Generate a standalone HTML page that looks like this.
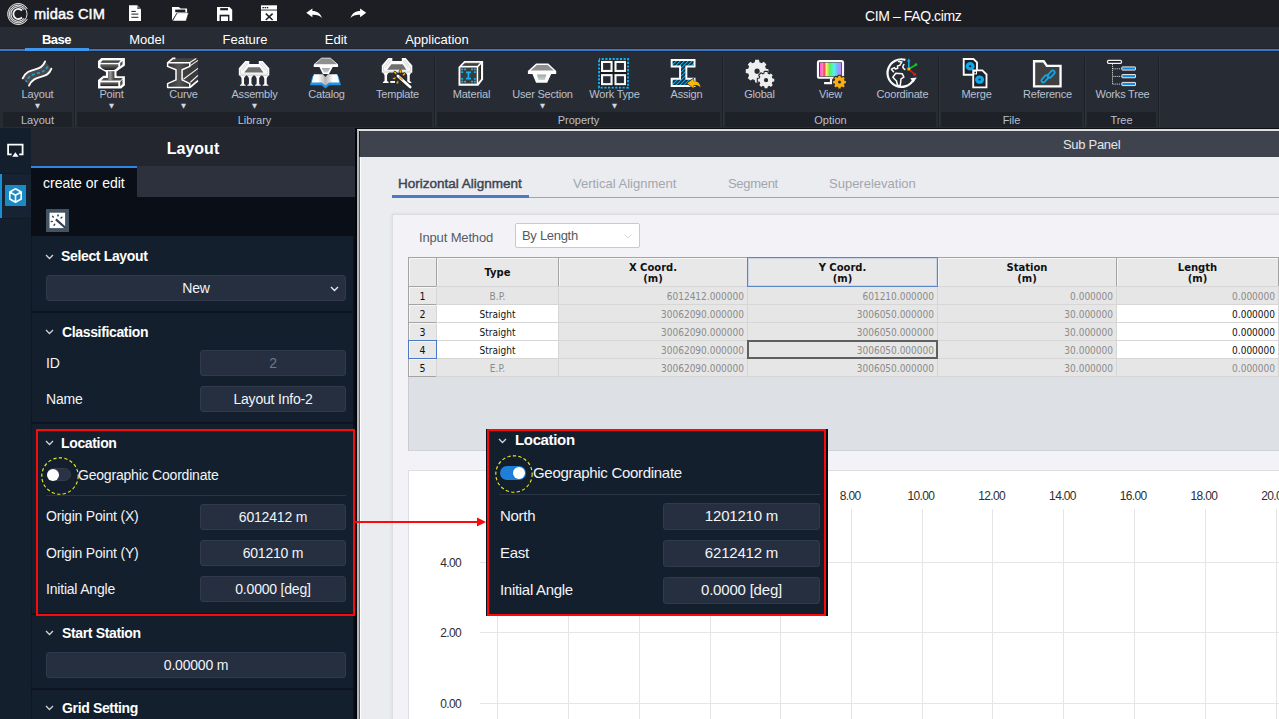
<!DOCTYPE html>
<html lang="en">
<head>
<meta charset="utf-8">
<title>CIM - FAQ.cimz</title>
<style>
*{box-sizing:border-box;margin:0;padding:0}
html,body{width:1279px;height:719px;overflow:hidden;background:#262a33;font-family:"Liberation Sans",sans-serif;}
.abs{position:absolute}
#app{position:relative;width:1279px;height:719px;overflow:hidden;background:#262a33}
/* title bar */
#title{left:0;top:0;width:1279px;height:27px;background:#1d1e23}
#title .brand{left:34px;top:4px;font-size:14.6px;letter-spacing:.15px;-webkit-text-stroke:0.45px #fff;color:#fff;line-height:20px;white-space:nowrap}
#title .doc{left:865px;top:6px;font-size:14px;letter-spacing:-0.4px;color:#fff;line-height:20px;white-space:nowrap}
/* menu */
#menu{left:0;top:27px;width:1279px;height:24px;background:#272b34}
#menu .mi{top:5px;font-size:13px;color:#fff;line-height:16px;white-space:nowrap;transform:translateX(-50%)}
#menuline{left:0;top:48px;width:1279px;height:3px;background:#3a77c4;border-top:1px solid #232329}
#baseline{left:25px;top:48px;width:64px;height:3px;background:#3f98ee}
/* ribbon */
#ribbon{left:0;top:51px;width:1279px;height:77px;background:#272b34;box-shadow:inset 0 1px 0 #232329}
.rb{top:0;width:90px;text-align:center;transform:translateX(-50%);margin-left:.5px}
.rb .lb{position:absolute;top:36px;left:0;width:100%;font-size:11px;letter-spacing:-0.2px;color:#b9c0cf;line-height:14px;white-space:nowrap;text-align:center}
.rb .ar{position:absolute;top:49px;left:0;width:100%;font-size:6.5px;color:#d4d7de;line-height:12px;text-align:center;font-family:'DejaVu Sans',sans-serif}
  .strip{top:61px;height:15px;background:#1e2128;font-size:11px;color:#b9c0cf;line-height:16px;text-align:center}
.sep{top:6px;width:2px;height:69px;background:#1c1f26;border-right:1px solid #30343f}
.ico{position:absolute;left:50%;transform:translateX(-50%)}
/* sidebar */
#leftcol{left:0;top:128px;width:31px;height:591px;background:#141f2d}
#sidehead{left:31px;top:128px;width:324px;height:38px;background:#23262f;color:#fff;font-weight:bold;font-size:16px;line-height:41px;text-align:center}
#tabstrip{left:31px;top:166px;width:324px;height:31px;background:#2c313d}
#tab{left:31px;top:166px;width:106px;height:31px;background:#0a0f17;border-top:2px solid #2f86e0;color:#fff;font-size:14px;line-height:31px;padding-left:12px}
#tool{left:31px;top:197px;width:324px;height:39px;background:#0a0f17}
#panel{left:31px;top:236px;width:322px;height:483px;background:#141f2d;box-shadow:inset 1px 0 0 #0f1722}
.divider{left:31px;width:322px;height:2px;background:#0d1520;box-shadow:0 0 1px #0d1520}
.h{left:61px;font-size:14px;letter-spacing:-0.35px;font-weight:bold;color:#fff;line-height:18px;white-space:nowrap}
.chev{width:9px;height:6px}
.lab{left:46px;font-size:14px;letter-spacing:-0.2px;color:#f2f4f7;line-height:18px;white-space:nowrap}
.inp{letter-spacing:-0.2px;background:#262f40;border:1px solid #303a4c;border-radius:3px;color:#f2f4f7;font-size:14px;text-align:center;height:26px;line-height:24px;white-space:nowrap}
#gutter{left:355px;top:128px;width:2px;height:591px;background:#04060a}
/* sub panel */
#sub{left:357px;top:129px;width:922px;height:590px;background:#ebecf0;border-left:2px solid #b4b7ba;border-top:2px solid #dcdee0;box-shadow:0 -1px 0 #0c0e12}
#subtitle{left:360px;top:131px;width:919px;height:26px;background:#3f434e;color:#e4e6ea;font-size:13px;line-height:27px;box-shadow:-1px 0 0 #141a24}
.t{font-size:13px;line-height:16px;white-space:nowrap}
table.g{border-collapse:collapse;font-family:"DejaVu Sans","Liberation Sans",sans-serif;font-size:10px;table-layout:fixed}

.gh{background:#e8e8e8;border:1px solid #a3a3a3;box-shadow:inset 1px 1px 0 #f6f6f6;font-family:"DejaVu Sans","Liberation Sans",sans-serif;font-size:10px;font-weight:bold;color:#111;text-align:center;white-space:nowrap;overflow:hidden}
.gc{background:#e6e6e6;border:1px solid #d6d6d6;font-family:"DejaVu Sans Condensed","DejaVu Sans","Liberation Sans",sans-serif;font-size:10px;color:#8b8b8b;line-height:19px;padding:0 3px;white-space:nowrap;overflow:hidden}
.gc.w{background:#fff;color:#111}
.ax{font-size:12px;color:#2e2e2e;line-height:14px;letter-spacing:-0.65px;white-space:nowrap}
.pl{font-size:15px;letter-spacing:-0.3px}
.pi{font-size:15px;height:27px;line-height:23px}
</style>
</head>
<body>
<div id="app">

<!-- TITLE BAR -->
<div id="title" class="abs">
  <div class="abs brand">midas CIM</div>
  <div class="abs doc">CIM &#8211; FAQ.cimz</div>
</div>

<!-- MENU BAR -->
<div id="menu" class="abs">
  <div class="abs mi" style="left:56.5px;font-weight:bold;letter-spacing:-0.5px">Base</div>
  <div class="abs mi" style="left:147px">Model</div>
  <div class="abs mi" style="left:245px">Feature</div>
  <div class="abs mi" style="left:336px">Edit</div>
  <div class="abs mi" style="left:437px">Application</div>
</div>
<div id="menuline" class="abs"></div>
<div id="baseline" class="abs"></div>

<!-- RIBBON -->
<div id="ribbon" class="abs">
  <div class="abs rb" style="left:37px"><div class="lb">Layout</div><div class="ar">&#9660;</div></div>
  <div class="abs rb" style="left:111px"><div class="lb">Point</div><div class="ar">&#9660;</div></div>
  <div class="abs rb" style="left:183px"><div class="lb">Curve</div><div class="ar">&#9660;</div></div>
  <div class="abs rb" style="left:254px"><div class="lb">Assembly</div><div class="ar">&#9660;</div></div>
  <div class="abs rb" style="left:326px"><div class="lb">Catalog</div></div>
  <div class="abs rb" style="left:397px"><div class="lb">Template</div></div>
  <div class="abs rb" style="left:471px"><div class="lb">Material</div></div>
  <div class="abs rb" style="left:542px"><div class="lb">User Section</div><div class="ar">&#9660;</div></div>
  <div class="abs rb" style="left:614px"><div class="lb">Work Type</div><div class="ar">&#9660;</div></div>
  <div class="abs rb" style="left:686px"><div class="lb">Assign</div></div>
  <div class="abs rb" style="left:759px"><div class="lb">Global</div></div>
  <div class="abs rb" style="left:830px"><div class="lb">View</div></div>
  <div class="abs rb" style="left:902px"><div class="lb">Coordinate</div></div>
  <div class="abs rb" style="left:976px"><div class="lb">Merge</div></div>
  <div class="abs rb" style="left:1047px"><div class="lb">Reference</div></div>
  <div class="abs rb" style="left:1122px"><div class="lb">Works Tree</div></div>

  <div class="abs strip" style="left:3px;width:69px">Layout</div>
  <div class="abs strip" style="left:77px;width:355px">Library</div>
  <div class="abs strip" style="left:437px;width:283px">Property</div>
  <div class="abs strip" style="left:725px;width:211px">Option</div>
  <div class="abs strip" style="left:941px;width:141px">File</div>
  <div class="abs strip" style="left:1087px;width:69px">Tree</div>
  <div class="abs sep" style="left:74px"></div>
  <div class="abs sep" style="left:434px"></div>
  <div class="abs sep" style="left:722px"></div>
  <div class="abs sep" style="left:938px"></div>
  <div class="abs sep" style="left:1084px"></div>
  <div class="abs sep" style="left:1158px"></div>
</div>

<!--ICONS--><svg class="abs" style="left:0;top:0;pointer-events:none" width="1279" height="128" viewBox="0 0 1279 128">
<defs>
<linearGradient id="gv" x1="0" y1="0" x2="0" y2="1"><stop offset="0" stop-color="#6a6a6a"/><stop offset="1" stop-color="#222"/></linearGradient>
<linearGradient id="gh" x1="0" y1="0" x2="1" y2="0"><stop offset="0" stop-color="#8a8a8a"/><stop offset="1" stop-color="#2a2a2a"/></linearGradient>
<linearGradient id="gcur" x1="0" y1="0" x2="1" y2="0"><stop offset="0" stop-color="#2e2e2e"/><stop offset=".5" stop-color="#555"/><stop offset="1" stop-color="#2e2e2e"/></linearGradient>
<linearGradient id="gweb" x1="0" y1="0" x2="1" y2="0"><stop offset="0" stop-color="#6a6a6a"/><stop offset=".35" stop-color="#9a9a9a"/><stop offset="1" stop-color="#3a3a3a"/></linearGradient>
<linearGradient id="gh2" x1="0" y1="0" x2="1" y2="0"><stop offset="0" stop-color="#555"/><stop offset="1" stop-color="#1e1e1e"/></linearGradient>
<linearGradient id="gfun" x1="0" y1="0" x2="0" y2="1"><stop offset="0" stop-color="#9aa3a3"/><stop offset="1" stop-color="#e8ecec"/></linearGradient>
<linearGradient id="gbook" x1="0" y1="0" x2="1" y2="0"><stop offset="0" stop-color="#fff"/><stop offset=".22" stop-color="#fff"/><stop offset=".5" stop-color="#b4b4b4"/><stop offset=".78" stop-color="#fff"/><stop offset="1" stop-color="#fff"/></linearGradient>
<linearGradient id="gfun2" x1="0" y1="0" x2="0" y2="1"><stop offset="0" stop-color="#9da5a5"/><stop offset="1" stop-color="#cfd4d4"/></linearGradient>
<linearGradient id="rain" x1="0" y1="0" x2="1" y2="0"><stop offset="0" stop-color="#ff48e8"/><stop offset=".12" stop-color="#ff86c4"/><stop offset=".21" stop-color="#ff3c50"/><stop offset=".31" stop-color="#fff070"/><stop offset=".46" stop-color="#58f050"/><stop offset=".66" stop-color="#50f4f0"/><stop offset=".84" stop-color="#86a4ff"/><stop offset="1" stop-color="#c884f0"/></linearGradient>
<pattern id="hatch" width="2.8" height="2.8" patternUnits="userSpaceOnUse" patternTransform="rotate(-45)"><rect width="2.8" height="2.8" fill="#1f1b1c"/><rect width="2.8" height="1.2" fill="#1aa9e6"/></pattern>
</defs>
<g fill="none" stroke="#f4f4f4" stroke-linecap="butt">
<path d="M25.62 18.82 A8.85 8.85 0 1 1 25.62 9.18" stroke-width="4.0" stroke-opacity="0.22"/>
<path d="M27.34 19.07 A10.45 10.45 0 1 1 27.34 8.93" stroke-width="1.0" stroke-opacity="0.9"/>
<circle cx="18.2" cy="14.0" r="8.85" stroke-width="1.0" stroke-opacity="0.9"/>
<path d="M23.91 18.46 A7.25 7.25 0 1 1 23.91 9.54" stroke-width="1.05" stroke-opacity="0.9"/>
<path d="M22.03 17.51 A5.05 5.05 0 1 1 22.03 10.49" stroke-width="1.85" />
</g>
<path d="M129 5.3 H137.2 L141 9.2 V21 H129 Z" fill="#fff"/><path d="M137.4 6 V9 H140.4 Z" fill="#1d1e23" opacity=".8"/><path d="M131.4 11.4 H135.8 M131.4 14.1 H138.4 M131.4 17.3 H138.4" stroke="#1d1e23" stroke-width="1"/>
<path d="M172 7 H178.8 L180.7 8.6 H187.1 V13 H176.6 L172 20.6 Z" fill="#fff"/><rect x="175.2" y="9.6" width="10.1" height="2.6" fill="#1d1e23"/><path d="M177.3 12.7 H188.6 L186 21 H172.6 Z" fill="#fff" stroke="#1d1e23" stroke-width=".5"/>
<path d="M217 7 H229.5 L232.2 9.7 V21 H217 Z" fill="#fff"/><rect x="220.2" y="8.1" width="7.8" height="2.2" fill="#1d1e23"/><rect x="219.6" y="14.7" width="9.8" height="6.3" fill="#1d1e23"/><rect x="221" y="16.4" width="7" height="4.6" fill="#fff"/>
<rect x="261" y="5.3" width="16" height="15.7" fill="#fff"/><rect x="261" y="9.6" width="16" height="0.9" fill="#1d1e23"/><path d="M262.4 7.6 h1.5 m.7 0 h1.5 m.7 0 h1.5" stroke="#1d1e23" stroke-width="1.1"/><path d="M265.8 13.6 L272.6 20 M272.6 13.6 L265.8 20" stroke="#1d1e23" stroke-width="1.5"/>
<path d="M306.3 12.8 L312.4 8.5 V11 C317 11 320.6 13.5 322 18 C319.5 15.4 316.5 14.6 312.4 14.8 V17.2 Z" fill="#fff"/>
<path d="M366.2 12.8 L360.1 8.5 V11 C355.5 11 351.9 13.5 350.5 18 C353 15.4 356 14.6 360.1 14.8 V17.2 Z" fill="#fff"/>
<path d="M22.7 78.3 C25.5 72 30 70.8 34.5 69.6 C39.5 68.3 43 67 45.1 61.4 L51.4 68.7 C49.3 74.3 45.8 75.6 40.8 76.9 C36.3 78.1 31.8 79.3 29 85.6 Z" fill="#4a4848"/>
<path d="M22.7 78.3 C25.5 72 30 70.8 34.5 69.6 C39.5 68.3 43 67 45.1 61.4 M29 85.6 C31.8 79.3 36.3 78.1 40.8 76.9 C45.8 75.6 49.3 74.3 51.4 68.7" fill="none" stroke="#fafafa" stroke-width="1.9" stroke-linecap="round"/>
<path d="M25.85 81.95 C28.65 75.65 33.15 74.45 37.65 73.25 C42.65 71.95 46.15 70.65 48.25 65.05" fill="none" stroke="#1f9bd1" stroke-width="1.7" stroke-dasharray="3.2 2.1" stroke-dashoffset="1.6"/>
<path d="M98 60.9 L101.4 58 H124.9 V65.4 L116.5 71.4 V75.6 L117.2 76.2 H124.9 V85.2 L121.2 88.6 H98 V79.9 L103.3 75.7 H105.9 V72 L98 67.7 Z" fill="#fdfdfd"/>
<path d="M100.4 62.7 L102.7 60.3 H120.7 L118.6 62.7 Z" fill="url(#gv)"/>
<path d="M120.2 62.9 L122.5 60.9 V64.3 L120.2 66.4 Z" fill="#4a4a4a"/>
<path d="M100.4 64.3 H118.3 V66.4 C117 68.4 115.4 69.4 113.8 69.9 H105.4 C103.6 69.4 101.6 68.4 100.4 66.4 Z" fill="url(#gv)"/>
<path d="M101.2 80.6 L103.8 78 H122.8 L120.7 80.6 Z" fill="#4c4c4c"/>
<rect x="108" y="71.2" width="6.4" height="8.9" fill="url(#gweb)"/>
<rect x="100.4" y="82.3" width="17.9" height="3.8" fill="url(#gv)"/>
<path d="M120.2 82 L122.5 79.6 V84.1 L120.2 86.2 Z" fill="#4a4a4a"/>
<path d="M189.8 62.7 L198 58.2 V80.6 L189.8 87.6 Z" fill="#3a3a3a"/>
<path d="M182.1 69.8 L189.8 66.4 V83.6 L182.1 79.9 Z" fill="#3e3e3e"/>
<path d="M167.6 62.7 L172.6 58.2 H198 L189.8 62.7 Z" fill="#444"/>
<path d="M167.6 62.9 L172.8 58.4 H175.4" stroke="#fff" stroke-width="1.6" fill="none" stroke-linejoin="round"/>
<path d="M167.6 62.7 H189.8 V66.4 L182.1 69.8 V79.9 L189.8 83.6 V87.6 H167.6 V83.6 L176 79.9 V69.8 L167.6 66.4 Z" fill="url(#gcur)" stroke="#fff" stroke-width="1.5" stroke-linejoin="round"/>
<path d="M190 62.6 L196.2 58.6 M190.4 65.6 L198 60.4 M183.4 79.2 L198 68.4 M190.4 82.2 L198 75.4" stroke="#f4f4f4" stroke-width="1.15"/>
<path d="M189.8 87.5 L198 80.6" stroke="#fff" stroke-width="1.7"/>
<path d="M245.20 60.90 L249.30 60.90 L249.30 64.00 L258.80 64.00 L258.80 60.90 L262.70 60.90 L269.30 68.30 L269.30 75.30 L238.80 75.30 L238.80 68.30 Z" fill="#fbfbfb"/>
<path d="M248.40 67.20 L259.70 67.20 L263.40 72.60 L244.20 72.60 Z" fill="#6f6f6f"/>
<path d="M246.60 62.60 L241.00 69.60 M247.90 63.60 L242.60 70.60 M261.40 62.60 L267.00 69.60 M260.10 63.60 L265.40 70.60" stroke="#b9b9b9" stroke-width=".55" fill="none"/>
<path d="M240.60 69.60 V74.10 H267.40 V69.60" stroke="#c4c4c4" stroke-width=".6" fill="none"/>
<path d="M239.00 75.20 H246.60 C244.40 76.60 244.05 77.80 244.05 79.20 V83.40 C244.10 84.40 245.00 84.60 245.70 85.00 V85.80 H239.90 V85.00 C240.60 84.60 241.50 84.40 241.55 83.40 V79.20 C241.55 77.80 241.20 76.60 239.00 75.20 Z" fill="#fbfbfb"/>
<path d="M246.40 75.20 H254.00 C251.80 76.60 251.45 77.80 251.45 79.20 V83.40 C251.50 84.40 252.40 84.60 253.10 85.00 V85.80 H247.30 V85.00 C248.00 84.60 248.90 84.40 248.95 83.40 V79.20 C248.95 77.80 248.60 76.60 246.40 75.20 Z" fill="#fbfbfb"/>
<path d="M254.10 75.20 H261.70 C259.50 76.60 259.15 77.80 259.15 79.20 V83.40 C259.20 84.40 260.10 84.60 260.80 85.00 V85.80 H255.00 V85.00 C255.70 84.60 256.60 84.40 256.65 83.40 V79.20 C256.65 77.80 256.30 76.60 254.10 75.20 Z" fill="#fbfbfb"/>
<path d="M261.70 75.20 H269.30 C267.10 76.60 266.75 77.80 266.75 79.20 V83.40 C266.80 84.40 267.70 84.60 268.40 85.00 V85.80 H262.60 V85.00 C263.30 84.60 264.20 84.40 264.25 83.40 V79.20 C264.25 77.80 263.90 76.60 261.70 75.20 Z" fill="#fbfbfb"/>
<path d="M321.4 58.2 H330.4 L337.8 64.6 H314 Z" fill="#8f8f8f" stroke="#fff" stroke-width=".8" stroke-linejoin="round"/>
<rect x="313.7" y="64.5" width="24.4" height="2.5" rx=".4" fill="#fff"/>
<path d="M319.4 66.9 H332.7 L328.8 74.2 H323 Z" fill="#fff"/>
<path d="M321.7 68 H330.2 L327.8 72.6 H323.9 Z" fill="url(#gfun2)"/>
<path d="M312.4 76 L310 85.3 H321.6 L325.4 88.4 L329.2 85.3 H341 L338.6 76 Z" fill="#1f93ea"/>
<path d="M321.6 74 H329.2 L325.4 78 Z" fill="#22252d"/>
<path d="M313.8 74.3 H323 L325.4 76.9 L327.8 74.3 H337.3 L339.2 82.6 H329 L325.4 85.6 L321.8 82.6 H311.8 Z" fill="url(#gbook)"/>
<path d="M388.20 58.00 L392.30 58.00 L392.30 61.10 L401.80 61.10 L401.80 58.00 L405.70 58.00 L412.30 65.40 L412.30 72.40 L381.80 72.40 L381.80 65.40 Z" fill="#fbfbfb"/>
<path d="M391.40 64.30 L402.70 64.30 L406.40 69.70 L387.20 69.70 Z" fill="#6f6f6f"/>
<path d="M389.60 59.70 L384.00 66.70 M390.90 60.70 L385.60 67.70 M404.40 59.70 L410.00 66.70 M403.10 60.70 L408.40 67.70" stroke="#b9b9b9" stroke-width=".55" fill="none"/>
<path d="M383.60 66.70 V71.20 H410.40 V66.70" stroke="#c4c4c4" stroke-width=".6" fill="none"/>
<path d="M382.00 72.30 H389.60 C387.40 73.70 387.05 74.90 387.05 76.30 V80.50 C387.10 81.50 388.00 81.70 388.70 82.10 V82.90 H382.90 V82.10 C383.60 81.70 384.50 81.50 384.55 80.50 V76.30 C384.55 74.90 384.20 73.70 382.00 72.30 Z" fill="#fbfbfb"/>
<path d="M404.70 72.30 H412.30 C410.10 73.70 409.75 74.90 409.75 76.30 V80.50 C409.80 81.50 410.70 81.70 411.40 82.10 V82.90 H405.60 V82.10 C406.30 81.70 407.20 81.50 407.25 80.50 V76.30 C407.25 74.90 406.90 73.70 404.70 72.30 Z" fill="#fbfbfb"/>
<rect x="390.3" y="81" width="4.7" height="1.9" fill="#fbfbfb"/>
<path d="M397.7 75.7 L410.4 87.3" stroke="#20242c" stroke-width="4.6" stroke-linecap="round"/>
<path d="M397.9 75.9 L410.2 87.1" stroke="#fff" stroke-width="2.7" stroke-linecap="round"/><path d="M398.9 76.8 L402.6 80.2" stroke="#ff9a14" stroke-width="1.5"/>
<g fill="#f5b400" stroke="#20242c" stroke-width=".7"><ellipse cx="400.4" cy="71.5" rx="1.2" ry="1.8"/><ellipse cx="395.4" cy="72.8" rx="1.2" ry="1.9" transform="rotate(-45 395.4 72.8)"/><ellipse cx="404" cy="74.3" rx="1.2" ry="1.9" transform="rotate(50 404 74.3)"/><ellipse cx="394.3" cy="78.3" rx="1.9" ry="1.2" transform="rotate(-15 394.3 78.3)"/><ellipse cx="397.5" cy="82.4" rx="1.2" ry="1.8" transform="rotate(40 397.5 82.4)"/></g>
<path d="M458.5 66.9 L464.3 60.9 H483.1 V79.4 L478.3 85.7 H458.5 Z" fill="#fdfdfd"/>
<rect x="460.4" y="67.5" width="16.3" height="16.1" fill="#3b3a3a"/>
<path d="M461.9 65.7 L465 62.8 H480.2 L477.4 65.7 Z" fill="url(#gv)"/>
<path d="M478.1 67.2 L481 64.2 V78.9 L478.1 82.8 Z" fill="url(#gh2)"/>
<g fill="#14b2f2"><rect x="461.2" y="68.4" width="2" height="1.8" rx=".5"/><rect x="464.1" y="68.4" width="2" height="1.8" rx=".5"/><rect x="471.0" y="68.4" width="2" height="1.8" rx=".5"/><rect x="473.9" y="68.4" width="2" height="1.8" rx=".5"/><rect x="461.2" y="71.3" width="2" height="1.8" rx=".5"/><rect x="473.9" y="71.3" width="2" height="1.8" rx=".5"/><rect x="461.2" y="77.9" width="2" height="1.8" rx=".5"/><rect x="473.9" y="77.9" width="2" height="1.8" rx=".5"/><rect x="461.2" y="80.8" width="2" height="1.8" rx=".5"/><rect x="464.1" y="80.8" width="2" height="1.8" rx=".5"/><rect x="471.0" y="80.8" width="2" height="1.8" rx=".5"/><rect x="473.9" y="80.8" width="2" height="1.8" rx=".5"/></g>
<path d="M465.9 72.3 H471 M465.9 78.7 H471 M468.45 72.3 V78.7" stroke="#14b2f2" stroke-width="1.7" fill="none"/>
<path d="M536.1 63.5 H548.3 L556.2 70.9 V74.1 H551.2 L547.2 82.8 H536.1 L532.4 74.1 H527.9 V70.9 Z" fill="#fcfcfc"/>
<path d="M536.9 65.1 H547.7 L553.8 70.4 H530.6 Z" fill="#8f8f8f"/>
<path d="M536.9 74.4 H546.4 L544.8 80 H538.5 Z" fill="url(#gfun2)"/>
<rect x="600" y="60" width="27" height="26.7" fill="#17191e"/>
<rect x="599.05" y="58.95" width="29" height="28.7" fill="none" stroke="#0fb4f6" stroke-width="1.9" stroke-dasharray="2.1 1.55" stroke-dashoffset="1"/>
<rect x="602.05" y="61.95" width="9.5" height="9.0" fill="#262a33" stroke="#f8f8f8" stroke-width="2.1"/>
<rect x="615.5" y="61.95" width="9.5" height="9.0" fill="#262a33" stroke="#f8f8f8" stroke-width="2.1"/>
<rect x="602.05" y="75.15" width="9.5" height="9.0" fill="#262a33" stroke="#f8f8f8" stroke-width="2.1"/>
<rect x="615.5" y="75.15" width="9.5" height="9.0" fill="#262a33" stroke="#f8f8f8" stroke-width="2.1"/>
<path d="M671.65 59.95 H694.55 V66.55 H686.35 V78.75 H694.55 V86.05 H671.65 V78.75 H680.05 V66.55 H671.65 Z" fill="url(#hatch)" stroke="#fdfdfd" stroke-width="1.9"/>
<path d="M687.2 83.2 L693.6 78.4 V81.2 C698 81 700.2 83.6 700.5 87.4 C698.8 85.4 696.8 85 693.6 85.1 V88.2 Z" fill="#fbb800" stroke="#262a33" stroke-width="1.1" stroke-linejoin="round" paint-order="stroke"/>
<path d="M768.44 69.31 L768.44 73.09 L765.99 73.56 L765.06 75.82 L766.46 77.89 L763.79 80.56 L761.72 79.16 L759.46 80.09 L758.99 82.54 L755.21 82.54 L754.74 80.09 L752.48 79.16 L750.41 80.56 L747.74 77.89 L749.14 75.82 L748.21 73.56 L745.76 73.09 L745.76 69.31 L748.21 68.84 L749.14 66.58 L747.74 64.51 L750.41 61.84 L752.48 63.24 L754.74 62.31 L755.21 59.86 L758.99 59.86 L759.46 62.31 L761.72 63.24 L763.79 61.84 L766.46 64.51 L765.06 66.58 L765.99 68.84 Z M754.50 71.20 a2.6 2.6 0 1 0 5.2 0 a2.6 2.6 0 1 0 -5.2 0 Z" fill="#eeeeee" fill-rule="evenodd" stroke-linejoin="round" />
<path d="M774.24 78.79 L774.24 81.51 L772.43 81.84 L771.76 83.46 L772.80 84.98 L770.88 86.90 L769.36 85.86 L767.74 86.53 L767.41 88.34 L764.69 88.34 L764.36 86.53 L762.74 85.86 L761.22 86.90 L759.30 84.98 L760.34 83.46 L759.67 81.84 L757.86 81.51 L757.86 78.79 L759.67 78.46 L760.34 76.84 L759.30 75.32 L761.22 73.40 L762.74 74.44 L764.36 73.77 L764.69 71.96 L767.41 71.96 L767.74 73.77 L769.36 74.44 L770.88 73.40 L772.80 75.32 L771.76 76.84 L772.43 78.46 Z M766.04 80.15 a0.01 0.01 0 1 0 0.02 0 a0.01 0.01 0 1 0 -0.02 0 Z" fill="#262a33" fill-rule="evenodd" stroke-linejoin="round" stroke="#262a33" stroke-width="2.2"/>
<path d="M774.24 78.79 L774.24 81.51 L772.43 81.84 L771.76 83.46 L772.80 84.98 L770.88 86.90 L769.36 85.86 L767.74 86.53 L767.41 88.34 L764.69 88.34 L764.36 86.53 L762.74 85.86 L761.22 86.90 L759.30 84.98 L760.34 83.46 L759.67 81.84 L757.86 81.51 L757.86 78.79 L759.67 78.46 L760.34 76.84 L759.30 75.32 L761.22 73.40 L762.74 74.44 L764.36 73.77 L764.69 71.96 L767.41 71.96 L767.74 73.77 L769.36 74.44 L770.88 73.40 L772.80 75.32 L771.76 76.84 L772.43 78.46 Z M763.95 80.15 a2.1 2.1 0 1 0 4.2 0 a2.1 2.1 0 1 0 -4.2 0 Z" fill="#eeeeee" fill-rule="evenodd" stroke-linejoin="round" />
<rect x="819" y="62" width="23" height="15" fill="#22252d"/><rect x="819.7" y="62.7" width="21.7" height="13.5" fill="url(#rain)"/>
<rect x="817.95" y="61.15" width="25.1" height="16.6" rx="1.6" fill="none" stroke="#fbfbfb" stroke-width="2.1"/>
<path d="M831.1 78.6 V83.2 H824.1" fill="none" stroke="#fbfbfb" stroke-width="2.3"/>
<path d="M845.91 81.03 L845.91 83.17 L844.33 83.38 L843.82 84.61 L844.79 85.88 L843.28 87.39 L842.01 86.42 L840.78 86.93 L840.57 88.51 L838.43 88.51 L838.22 86.93 L836.99 86.42 L835.72 87.39 L834.21 85.88 L835.18 84.61 L834.67 83.38 L833.09 83.17 L833.09 81.03 L834.67 80.82 L835.18 79.59 L834.21 78.32 L835.72 76.81 L836.99 77.78 L838.22 77.27 L838.43 75.69 L840.57 75.69 L840.78 77.27 L842.01 77.78 L843.28 76.81 L844.79 78.32 L843.82 79.59 L844.33 80.82 Z M839.49 82.10 a0.01 0.01 0 1 0 0.02 0 a0.01 0.01 0 1 0 -0.02 0 Z" fill="#262a33" fill-rule="evenodd" stroke-linejoin="round" stroke="#262a33" stroke-width="2"/>
<path d="M845.91 81.03 L845.91 83.17 L844.33 83.38 L843.82 84.61 L844.79 85.88 L843.28 87.39 L842.01 86.42 L840.78 86.93 L840.57 88.51 L838.43 88.51 L838.22 86.93 L836.99 86.42 L835.72 87.39 L834.21 85.88 L835.18 84.61 L834.67 83.38 L833.09 83.17 L833.09 81.03 L834.67 80.82 L835.18 79.59 L834.21 78.32 L835.72 76.81 L836.99 77.78 L838.22 77.27 L838.43 75.69 L840.57 75.69 L840.78 77.27 L842.01 77.78 L843.28 76.81 L844.79 78.32 L843.82 79.59 L844.33 80.82 Z M838.00 82.10 a1.5 1.5 0 1 0 3.0 0 a1.5 1.5 0 1 0 -3.0 0 Z" fill="#fbae0c" fill-rule="evenodd" stroke-linejoin="round" />
<path d="M905.4 59.9 A13.8 13.8 0 1 0 913.6 79.4" fill="none" stroke="#fbfbfb" stroke-width="2.2"/>
<path d="M910.2 78.2 L916.8 77.6 L913.4 82.4 Z" fill="#fbfbfb"/>
<path d="M898.5 61.4 L901.9 61.9 L899.7 65.4 L897.5 66.0 L897.7 68.3 L895.4 69.1 L894.4 67.6 L891.4 69.2 L893.5 71.7" fill="none" stroke="#fbfbfb" stroke-width="1.5" stroke-linejoin="round" stroke-linecap="round"/>
<path d="M895.8 73.3 L902.2 73.7 L903.9 77.2 L901.0 78.8 L900.3 85.3 L897.5 85.5 L896.5 81.0 L892.8 77.2 Z" fill="none" stroke="#fbfbfb" stroke-width="1.5" stroke-linejoin="round"/>
<path d="M903.9 64.5 Q901.4 67.2 904.8 69.4" fill="none" stroke="#fbfbfb" stroke-width="1.6" stroke-linecap="round"/>
<path d="M908.8 69 V61" stroke="#12a2e8" stroke-width="1.7"/><path d="M906.9 61.6 L908.8 58.2 L910.7 61.6 Z" fill="#12a2e8"/>
<path d="M908.8 69 L915.6 65" stroke="#14c814" stroke-width="1.6"/><circle cx="916" cy="64.7" r="1.4" fill="#14c814"/>
<path d="M908.8 69 L914.2 74" stroke="#e41414" stroke-width="1.6"/><circle cx="914.6" cy="74.3" r="1.6" fill="#e41414"/>
<rect x="907.4" y="67.7" width="2.8" height="2.7" fill="#fbb80c"/>
<path d="M963.7 59 H973.4 L977 62.3 V74.7 H963.7 Z" fill="#1f2026" stroke="#fdfdfd" stroke-width="1.85" stroke-linejoin="miter"/>
<ellipse cx="970.1" cy="66.2" rx="2.9" ry="2.6" fill="none" stroke="#10a8ec" stroke-width="3.2"/>
<path d="M973.2 70.3 H982.4 L986.5 74.5 V87.3 H973.2 Z" fill="#1f2026" stroke="#fdfdfd" stroke-width="1.85" stroke-linejoin="miter"/>
<ellipse cx="979.6" cy="79.6" rx="2.9" ry="2.6" fill="none" stroke="#10a8ec" stroke-width="3.2"/>
<rect x="973.9" y="71.2" width="2.6" height="2.7" fill="#1f2026" stroke="#fdfdfd" stroke-width="1"/>
<path d="M1034.05 61.25 H1043.7 L1046.9 65.95 H1060.55 V86.35 H1034.05 Z" fill="#404040" stroke="#fdfdfd" stroke-width="2.3" stroke-linejoin="miter"/>
<g fill="none" stroke="#10a8ec" stroke-width="1.7"><rect x="-4.2" y="-1.9" width="8.4" height="3.8" rx="1.9" transform="translate(1051.2,74.1) rotate(-48)"/><rect x="-4.2" y="-1.9" width="8.4" height="3.8" rx="1.9" transform="translate(1044.9,78.8) rotate(-48)"/></g>
<rect x="1107.5" y="60.4" width="14" height="2.9" rx="1" fill="#1f2128" stroke="#f4f4f4" stroke-width="1.2"/>
<path d="M1112.5 64.2 V84.6 M1113.4 68.8 H1121.4 M1113.4 76.4 H1121.4 M1113.4 84.1 H1121.4" stroke="#e4e4e4" stroke-width="1" stroke-dasharray="1 0.9" fill="none"/>
<rect x="1121.9" y="66.9" width="13.6" height="3.2" rx=".5" fill="#1488e8" stroke="#ece6e2" stroke-width="1"/>
<rect x="1121.9" y="74.55000000000001" width="13.6" height="3.2" rx=".5" fill="#1488e8" stroke="#ece6e2" stroke-width="1"/>
<rect x="1121.9" y="82.4" width="13.6" height="3.2" rx=".5" fill="#1488e8" stroke="#ece6e2" stroke-width="1"/>
</svg><!--/ICONS-->
<!-- SIDEBAR -->
<div id="leftcol" class="abs"></div>
<div id="sidehead" class="abs">Layout</div>
<div id="tabstrip" class="abs"></div>
<div id="tab" class="abs">create or edit</div>
<div id="tool" class="abs"></div>
<div id="panel" class="abs"></div>

<!-- left column icons -->
<div class="abs" style="left:0;top:173px;width:31px;height:1px;background:#111a26"></div>
<div class="abs" style="left:0;top:174px;width:31px;height:44px;background:#172332"></div>
<div class="abs" style="left:0;top:218px;width:31px;height:1px;background:#111a26"></div>
<div class="abs" style="left:0;top:174px;width:2px;height:44px;background:#1b8fd6"></div>
<div class="abs" style="left:5px;top:185px;width:21px;height:21px;background:#1a8ac6"></div>
<svg class="abs" style="left:5px;top:185px" width="21" height="21" viewBox="0 0 21 21"><path d="M10.5 3.8 L16.2 7 V14 L10.5 17.2 L4.8 14 V7 Z M4.8 7 L10.5 10.3 L16.2 7 M10.5 10.3 V17.2" fill="none" stroke="#fff" stroke-width="1.6" stroke-linejoin="round"/></svg>
<svg class="abs" style="left:7px;top:143px" width="17" height="16" viewBox="0 0 17 16"><path d="M4.6 11.4 H1.1 V1.6 H15.6 V11.4 H12.2" fill="none" stroke="#fff" stroke-width="1.8"/><path d="M8.4 9.2 L11.6 13.8 H5.2 Z" fill="#fff"/></svg>

<!-- tool button -->
<div class="abs" style="left:46px;top:209px;width:23px;height:23px;background:#425361"></div>
<svg class="abs" style="left:46px;top:209px" width="23" height="23" viewBox="46 209 23 23"><rect x="49.5" y="212.7" width="15.6" height="15.4" fill="#fff"/><path d="M55.9 219.4 L65.3 227.8" stroke="#33424e" stroke-width="2.2"/><g fill="#33424e"><ellipse cx="58" cy="215.4" rx=".8" ry="1.2"/><ellipse cx="53" cy="216.7" rx=".8" ry="1.3" transform="rotate(-45 53 216.7)"/><ellipse cx="61.5" cy="217.7" rx=".8" ry="1.3" transform="rotate(50 61.5 217.7)"/><ellipse cx="51.8" cy="221.5" rx="1.3" ry=".8"/><ellipse cx="54.4" cy="224.8" rx=".8" ry="1.3" transform="rotate(35 54.4 224.8)"/></g></svg>

<!-- Select Layout -->
<svg class="abs chev" style="left:45px;top:254px" viewBox="0 0 9 6"><path d="M1 1 L4.5 4.5 L8 1" fill="none" stroke="#cfd5de" stroke-width="1.3"/></svg>
<div class="abs h" style="top:247px">Select Layout</div>
<div class="abs inp" style="left:46px;top:275px;width:300px">New</div>
<svg class="abs chev" style="left:330px;top:286px" viewBox="0 0 9 6"><path d="M1 1 L4.5 4.5 L8 1" fill="none" stroke="#e6e9ee" stroke-width="1.4"/></svg>
<div class="abs divider" style="top:311px"></div>

<!-- Classification -->
<svg class="abs chev" style="left:45px;top:329px" viewBox="0 0 9 6"><path d="M1 1 L4.5 4.5 L8 1" fill="none" stroke="#cfd5de" stroke-width="1.3"/></svg>
<div class="abs h" style="top:323px;left:62px">Classification</div>
<div class="abs lab" style="top:354px">ID</div>
<div class="abs inp" style="left:200px;top:350px;width:146px;color:#6d7888">2</div>
<div class="abs lab" style="top:390px">Name</div>
<div class="abs inp" style="left:200px;top:386px;width:146px">Layout Info-2</div>
<div class="abs divider" style="top:422px"></div>

<!-- Location -->
<svg class="abs chev" style="left:45px;top:440px" viewBox="0 0 9 6"><path d="M1 1 L4.5 4.5 L8 1" fill="none" stroke="#cfd5de" stroke-width="1.3"/></svg>
<div class="abs h" style="top:434px">Location</div>
<div class="abs" style="left:47px;top:468px;width:24px;height:13px;border-radius:7px;background:#2a3345;border:1px solid #323c4e"></div>
<div class="abs" style="left:47px;top:468.5px;width:12px;height:12px;border-radius:6px;background:#fff"></div>
<svg class="abs" style="left:38.7px;top:454.9px" width="42" height="42" viewBox="0 0 42 42"><circle cx="21" cy="21" r="18.2" fill="none" stroke="#e8e622" stroke-width="1.15" stroke-dasharray="3.3 2.3"/></svg>
<div class="abs lab" style="left:78px;top:466px">Geographic Coordinate</div>
<div class="abs" style="left:46px;top:495px;width:300px;height:1px;background:#2a3444"></div>
<div class="abs lab" style="top:507px">Origin Point (X)</div>
<div class="abs inp" style="left:200px;top:504px;width:146px">6012412 m</div>
<div class="abs lab" style="top:544px">Origin Point (Y)</div>
<div class="abs inp" style="left:200px;top:540px;width:146px">601210 m</div>
<div class="abs lab" style="top:580px">Initial Angle</div>
<div class="abs inp" style="left:200px;top:576px;width:146px">0.0000 [deg]</div>
<div class="abs divider" style="top:613px"></div>
<div class="abs" style="left:36px;top:429px;width:319px;height:187px;border:2px solid #fa0a0a;z-index:3"></div>

<!-- Start Station -->
<svg class="abs chev" style="left:45px;top:630px" viewBox="0 0 9 6"><path d="M1 1 L4.5 4.5 L8 1" fill="none" stroke="#cfd5de" stroke-width="1.3"/></svg>
<div class="abs h" style="top:624px;left:62px">Start Station</div>
<div class="abs inp" style="left:46px;top:652px;width:300px">0.00000 m</div>
<div class="abs divider" style="top:688px"></div>
<svg class="abs chev" style="left:45px;top:705px" viewBox="0 0 9 6"><path d="M1 1 L4.5 4.5 L8 1" fill="none" stroke="#cfd5de" stroke-width="1.3"/></svg>
<div class="abs h" style="top:699px;left:62px">Grid Setting</div>
<div class="abs" style="left:353px;top:236px;width:2px;height:483px;background:#0b111a"></div>
<div id="gutter" class="abs"></div>

<!-- SUB PANEL -->
<div id="sub" class="abs"></div>
<div id="subtitle" class="abs"><span class="abs" style="left:703px;top:0;letter-spacing:-0.3px;white-space:nowrap">Sub Panel</span></div>

<div class="abs" style="left:359px;top:157px;width:1px;height:562px;background:#6c6c6c"></div>
<div class="abs" style="left:360px;top:157px;width:1px;height:562px;background:#fdfdfd"></div>
<!-- sub panel tabs -->
<div class="abs t" style="left:398px;top:176px;color:#3d4552;font-size:13.5px;-webkit-text-stroke:0.45px #3d4552">Horizontal Alignment</div>
<div class="abs t" style="left:573px;top:176px;color:#a3a6ad">Vertical Alignment</div>
<div class="abs t" style="left:728px;top:176px;color:#a3a6ad;letter-spacing:-0.3px">Segment</div>
<div class="abs t" style="left:829px;top:176px;color:#a3a6ad">Superelevation</div>
<div class="abs" style="left:392px;top:197px;width:887px;height:1px;background:#86a8d6"></div>
<div class="abs" style="left:392px;top:195px;width:137px;height:3px;background:#4a7cc4"></div>
<!-- group box -->
<div class="abs" style="left:392px;top:214px;width:900px;height:520px;background:#f3f3f7;border:1px solid #dddde2;box-shadow:0 0 3px rgba(0,0,0,.10)"></div>
<div class="abs t" style="left:419px;top:230px;color:#555b66;letter-spacing:-0.15px">Input Method</div>
<div class="abs" style="left:515px;top:223px;width:125px;height:25px;background:#fff;border:1px solid #c9c9ce;border-radius:2px"></div>
<div class="abs t" style="left:522px;top:228px;color:#555b66;letter-spacing:-0.3px">By Length</div>
<svg class="abs" style="left:624px;top:234px" width="8" height="5" viewBox="0 0 8 5"><path d="M0.5 0.5 L4 4 L7.5 0.5" fill="none" stroke="#d2d2d6" stroke-width="1"/></svg>
<div class="abs" style="left:408px;top:257px;width:871px;height:194px;background:#dde1e5;border-left:1px solid #c9cdd2;border-bottom:1px solid #cfd3d7"></div>
<div class="abs gh" style="left:408px;top:257px;width:29px;height:30px;line-height:28px"></div>
<div class="abs gh" style="left:436px;top:257px;width:123px;height:30px;line-height:30px">Type</div>
<div class="abs gh" style="left:558px;top:257px;width:190px;height:30px;line-height:11px;padding-top:4px">X Coord.<br>(m)</div>
<div class="abs gh" style="left:747px;top:257px;width:191px;height:30px;line-height:11px;padding-top:4px">Y Coord.<br>(m)</div>
<div class="abs gh" style="left:937px;top:257px;width:180px;height:30px;line-height:11px;padding-top:4px">Station<br>(m)</div>
<div class="abs gh" style="left:1116px;top:257px;width:163px;height:30px;line-height:11px;padding-top:4px">Length<br>(m)</div>
<div class="abs gh" style="left:408px;top:286px;width:29px;height:19px;line-height:19px;font-weight:normal;font-family:'DejaVu Sans Condensed','DejaVu Sans',sans-serif;font-size:10.5px">1</div>
<div class="abs gc" style="left:436px;top:286px;width:123px;height:19px;text-align:center">B.P.</div>
<div class="abs gc" style="left:558px;top:286px;width:190px;height:19px;text-align:right">6012412.000000</div>
<div class="abs gc" style="left:747px;top:286px;width:191px;height:19px;text-align:right">601210.000000</div>
<div class="abs gc" style="left:937px;top:286px;width:180px;height:19px;text-align:right">0.000000</div>
<div class="abs gc" style="left:1116px;top:286px;width:163px;height:19px;text-align:right">0.000000</div>
<div class="abs gh" style="left:408px;top:304px;width:29px;height:19px;line-height:19px;font-weight:normal;font-family:'DejaVu Sans Condensed','DejaVu Sans',sans-serif;font-size:10.5px">2</div>
<div class="abs gc w" style="left:436px;top:304px;width:123px;height:19px;text-align:center">Straight</div>
<div class="abs gc" style="left:558px;top:304px;width:190px;height:19px;text-align:right">30062090.000000</div>
<div class="abs gc" style="left:747px;top:304px;width:191px;height:19px;text-align:right">3006050.000000</div>
<div class="abs gc" style="left:937px;top:304px;width:180px;height:19px;text-align:right">30.000000</div>
<div class="abs gc w" style="left:1116px;top:304px;width:163px;height:19px;text-align:right">0.000000</div>
<div class="abs gh" style="left:408px;top:322px;width:29px;height:19px;line-height:19px;font-weight:normal;font-family:'DejaVu Sans Condensed','DejaVu Sans',sans-serif;font-size:10.5px">3</div>
<div class="abs gc w" style="left:436px;top:322px;width:123px;height:19px;text-align:center">Straight</div>
<div class="abs gc" style="left:558px;top:322px;width:190px;height:19px;text-align:right">30062090.000000</div>
<div class="abs gc" style="left:747px;top:322px;width:191px;height:19px;text-align:right">3006050.000000</div>
<div class="abs gc" style="left:937px;top:322px;width:180px;height:19px;text-align:right">30.000000</div>
<div class="abs gc w" style="left:1116px;top:322px;width:163px;height:19px;text-align:right">0.000000</div>
<div class="abs gh" style="left:408px;top:340px;width:29px;height:19px;line-height:19px;font-weight:normal;font-family:'DejaVu Sans Condensed','DejaVu Sans',sans-serif;font-size:10.5px">4</div>
<div class="abs gc w" style="left:436px;top:340px;width:123px;height:19px;text-align:center">Straight</div>
<div class="abs gc" style="left:558px;top:340px;width:190px;height:19px;text-align:right">30062090.000000</div>
<div class="abs gc" style="left:747px;top:340px;width:191px;height:19px;text-align:right">3006050.000000</div>
<div class="abs gc" style="left:937px;top:340px;width:180px;height:19px;text-align:right">30.000000</div>
<div class="abs gc w" style="left:1116px;top:340px;width:163px;height:19px;text-align:right">0.000000</div>
<div class="abs gh" style="left:408px;top:358px;width:29px;height:19px;line-height:19px;font-weight:normal;font-family:'DejaVu Sans Condensed','DejaVu Sans',sans-serif;font-size:10.5px">5</div>
<div class="abs gc" style="left:436px;top:358px;width:123px;height:19px;text-align:center">E.P.</div>
<div class="abs gc" style="left:558px;top:358px;width:190px;height:19px;text-align:right">30062090.000000</div>
<div class="abs gc" style="left:747px;top:358px;width:191px;height:19px;text-align:right">3006050.000000</div>
<div class="abs gc" style="left:937px;top:358px;width:180px;height:19px;text-align:right">30.000000</div>
<div class="abs gc" style="left:1116px;top:358px;width:163px;height:19px;text-align:right">0.000000</div>

<!-- grid selection highlights -->
<div class="abs" style="left:408px;top:340px;width:29px;height:19px;border:1px solid #4a78c2"></div>
<div class="abs" style="left:747px;top:257px;width:191px;height:30px;border:1px solid #5a86c6;box-shadow:inset 0 0 0 1px #c9d6ea"></div>
<div class="abs" style="left:747px;top:340px;width:191px;height:19px;border:2px solid #5f5f5f"></div>
<!-- chart -->
<div class="abs" style="left:408px;top:470px;width:880px;height:260px;background:#fff;border:1px solid #dcdfe3"></div>
<div class="abs" style="left:497px;top:509px;width:1px;height:210px;background:#e5e5e7"></div>
<div class="abs" style="left:568px;top:509px;width:1px;height:210px;background:#e5e5e7"></div>
<div class="abs" style="left:639px;top:509px;width:1px;height:210px;background:#e5e5e7"></div>
<div class="abs" style="left:710px;top:509px;width:1px;height:210px;background:#e5e5e7"></div>
<div class="abs" style="left:780px;top:509px;width:1px;height:210px;background:#e5e5e7"></div>
<div class="abs" style="left:851px;top:509px;width:1px;height:210px;background:#e5e5e7"></div>
<div class="abs" style="left:922px;top:509px;width:1px;height:210px;background:#e5e5e7"></div>
<div class="abs" style="left:992px;top:509px;width:1px;height:210px;background:#e5e5e7"></div>
<div class="abs" style="left:1063px;top:509px;width:1px;height:210px;background:#e5e5e7"></div>
<div class="abs" style="left:1134px;top:509px;width:1px;height:210px;background:#e5e5e7"></div>
<div class="abs" style="left:1205px;top:509px;width:1px;height:210px;background:#e5e5e7"></div>
<div class="abs" style="left:1276px;top:509px;width:1px;height:210px;background:#e5e5e7"></div>
<div class="abs" style="left:480px;top:562px;width:800px;height:1px;background:#e5e5e7"></div>
<div class="abs" style="left:480px;top:632px;width:800px;height:1px;background:#e5e5e7"></div>
<div class="abs" style="left:480px;top:703px;width:800px;height:1px;background:#e5e5e7"></div>
<div class="abs ax" style="left:830.2px;top:489px;width:40px;text-align:center">8.00</div>
<div class="abs ax" style="left:900.9px;top:489px;width:40px;text-align:center">10.00</div>
<div class="abs ax" style="left:971.7px;top:489px;width:40px;text-align:center">12.00</div>
<div class="abs ax" style="left:1042.5px;top:489px;width:40px;text-align:center">14.00</div>
<div class="abs ax" style="left:1113.2px;top:489px;width:40px;text-align:center">16.00</div>
<div class="abs ax" style="left:1183.9px;top:489px;width:40px;text-align:center">18.00</div>
<div class="abs ax" style="left:1254.7px;top:489px;width:40px;text-align:center">20.00</div>
<div class="abs ax" style="left:421px;top:556px;width:40px;text-align:right">4.00</div>
<div class="abs ax" style="left:421px;top:626px;width:40px;text-align:right">2.00</div>
<div class="abs ax" style="left:421px;top:697px;width:40px;text-align:right">0.00</div>
<!-- arrow -->
<div class="abs" style="left:355px;top:521px;width:125px;height:2px;background:#fa0a0a"></div>
<svg class="abs" style="left:477px;top:517px" width="10" height="10" viewBox="0 0 10 10"><path d="M0 0.5 L9 5 L0 9.5 Z" fill="#fa0a0a"/></svg>
<!-- popup -->
<div class="abs" style="left:486px;top:429px;width:342px;height:187px;background:#141f2d;border-left:1px solid #0a1018;border-right:2px solid #050a12"></div>
<div class="abs" style="left:487px;top:429px;width:339px;height:187px;border:2px solid #fa0a0a"></div>
<svg class="abs chev" style="left:498px;top:438px" viewBox="0 0 9 6"><path d="M1 1 L4.5 4.5 L8 1" fill="none" stroke="#cfd5de" stroke-width="1.3"/></svg>
<div class="abs h" style="left:515px;top:431px;font-size:15px">Location</div>
<div class="abs" style="left:500px;top:466px;width:26px;height:14px;border-radius:7px;background:#1e7fd8"></div>
<div class="abs" style="left:513px;top:467px;width:12px;height:12px;border-radius:6px;background:#fff"></div>
<svg class="abs" style="left:492.5px;top:453px" width="42" height="42" viewBox="0 0 42 42"><circle cx="21" cy="21" r="18.2" fill="none" stroke="#e8e622" stroke-width="1.15" stroke-dasharray="3.3 2.3"/></svg>
<div class="abs lab pl" style="left:533px;top:464px">Geographic Coordinate</div>
<div class="abs" style="left:499px;top:494px;width:321px;height:1px;background:#2a3444"></div>
<div class="abs lab pl" style="left:500px;top:507px">North</div>
<div class="abs inp pi" style="left:663px;top:503px;width:157px">1201210 m</div>
<div class="abs lab pl" style="left:500px;top:544px">East</div>
<div class="abs inp pi" style="left:663px;top:540px;width:157px">6212412 m</div>
<div class="abs lab pl" style="left:500px;top:581px">Initial Angle</div>
<div class="abs inp pi" style="left:663px;top:577px;width:157px">0.0000 [deg]</div>

</div>
</body>
</html>
